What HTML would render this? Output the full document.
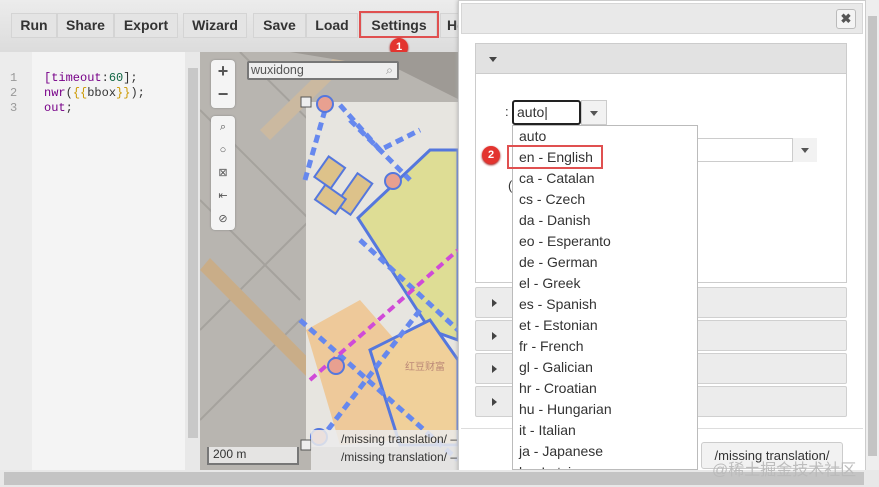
<!DOCTYPE html><html><head><meta charset="utf-8"><style>
*{box-sizing:border-box}body{margin:0;width:879px;height:487px;overflow:hidden;font-family:"Liberation Sans",Arial,sans-serif;background:#ddd;position:relative}
.a{position:absolute}
.tb{left:0;top:0;width:879px;height:52px;background:linear-gradient(#ececec,#dcdcdc)}
.btn{position:absolute;top:13px;height:25px;background:#e4e4e4;border:1px solid #d4d4d4;font-size:14px;color:#333;text-align:center;line-height:23px;font-weight:bold}
.mono{font-family:"Liberation Mono",monospace;font-size:12px}
.dd div{height:21px;line-height:21px;padding-left:6px;font-size:14px;color:#333}
.acc{left:475px;width:372px;height:31px;background:#ececec;border:1px solid #d0d0d0;border-radius:2px}
.tri{position:absolute;left:16px;top:11px;width:0;height:0;border-top:4px solid transparent;border-bottom:4px solid transparent;border-left:5px solid #444}
.badge{width:18px;height:18px;border-radius:9px;background:#e3342f;color:#fff;font-size:11px;font-weight:bold;text-align:center;line-height:18px;box-shadow:0 1px 2px #900}
</style></head><body>
<div class="a tb"></div>
<div class="btn" style="left:11px;width:46px">Run</div>
<div class="btn" style="left:57px;width:57px">Share</div>
<div class="btn" style="left:114px;width:64px">Export</div>
<div class="btn" style="left:183px;width:64px">Wizard</div>
<div class="btn" style="left:253px;width:53px">Save</div>
<div class="btn" style="left:306px;width:52px">Load</div>
<div class="btn" style="left:361px;width:76px">Settings</div>
<div class="a" style="left:359px;top:11px;width:80px;height:27px;border:2px solid #e05050"></div>
<div class="btn" style="left:440px;width:30px;text-align:left;padding-left:6px">He</div>
<div class="a badge" style="left:390px;top:38px">1</div>
<!-- editor -->
<div class="a" style="left:0;top:52px;width:32px;height:418px;background:#ececec"></div>
<div class="a" style="left:32px;top:52px;width:153px;height:418px;background:#f4f4f4"></div>
<div class="a mono" style="left:10px;top:71px;color:#999;line-height:15px">1<br>2<br>3</div>
<div class="a mono" style="left:44px;top:71px;line-height:15px;color:#333"><span style="color:#708">[timeout</span>:<span style="color:#164">60</span>];<br><span style="color:#708">nwr</span>(<span style="color:#c90">{{</span>bbox<span style="color:#c90">}}</span>);<br><span style="color:#708">out</span>;</div>
<div class="a" style="left:185px;top:52px;width:15px;height:418px;background:#e8e8e8"></div>
<div class="a" style="left:188px;top:68px;width:10px;height:370px;background:#c8c8c8"></div>
<!-- map -->
<svg class="a" style="left:200px;top:52px" width="260" height="418" viewBox="200 52 260 418">
<rect x="200" y="52" width="260" height="418" fill="#b8b5b0"/>
<g stroke="#a5a29d" stroke-width="2" fill="none"><path d="M200 110 L320 230 M200 200 L300 300 M240 52 L460 270 M200 330 L330 200 M200 420 L300 320"/></g>
<path d="M200 270 L320 390 L330 380 L210 258Z" fill="#c9ad88"/>
<path d="M260 130 L340 52 L360 52 L270 140Z" fill="#cbb9a0"/>
<path d="M290 52 L460 52 L460 100 L400 70Z" fill="#9e9a95"/>
<rect x="306" y="102" width="152" height="345" fill="#e7e5e0"/>
<path d="M358 218 L430 150 L458 150 L458 340 L430 330Z" fill="#dedd95" stroke="#5577dd" stroke-width="3"/>
<path d="M306 330 L360 300 L430 380 L400 440 L340 445Z" fill="#eec99a"/>
<path d="M370 350 L430 320 L458 360 L458 445 L400 445Z" fill="#f0d09a" stroke="#5577dd" stroke-width="3"/>
<g fill="#ddc28a" stroke="#5577dd" stroke-width="2"><rect x="320" y="160" width="20" height="25" transform="rotate(35 330 172)"/><rect x="345" y="175" width="18" height="38" transform="rotate(35 354 194)"/><rect x="318" y="190" width="25" height="18" transform="rotate(35 330 199)"/></g>
<g stroke="#6688ee" stroke-width="5" stroke-dasharray="8 5" fill="none"><path d="M325 110 L305 180 M340 105 L380 150 L420 130 M350 120 L410 180 M300 320 L458 460 M320 440 L420 310 M360 240 L458 330"/></g>
<path d="M310 380 L458 250" stroke="#d04ad8" stroke-width="4" stroke-dasharray="8 5"/>
<g fill="#e8a090" stroke="#5577dd" stroke-width="2"><circle cx="393" cy="181" r="8"/><circle cx="336" cy="366" r="8"/><circle cx="319" cy="437" r="8"/><circle cx="325" cy="104" r="8"/></g>
<text x="405" y="370" font-size="10" fill="#b87" font-family="Noto Sans CJK SC,sans-serif">红豆财富</text>
<rect x="301" y="97" width="10" height="10" fill="#eee" stroke="#555"/>
<rect x="301" y="440" width="10" height="10" fill="#eee" stroke="#555"/>
</svg>
<div class="a" style="left:247px;top:61px;width:152px;height:19px;background:#eee;border:2px solid #777;border-radius:2px;font-size:12.5px;color:#555;padding-left:2px;line-height:15px">wuxidong<span style="position:absolute;right:4px;color:#999">⌕</span></div>
<div class="a" style="left:211px;top:60px;width:24px;height:48px;background:#f4f4f4;border-radius:4px;box-shadow:0 0 2px #888;text-align:center;color:#555;font-size:18px;line-height:23px;font-weight:bold">+<br>−</div>
<div class="a" style="left:211px;top:116px;width:24px;height:114px;background:#f4f4f4;border-radius:4px;box-shadow:0 0 2px #888;text-align:center;color:#555;font-size:11px;line-height:23px">⌕<br>○<br>⊠<br>⇤<br>⊘</div>
<div class="a" style="left:207px;top:447px;width:92px;height:18px;background:rgba(240,240,240,.8);border:2px solid #777;border-top:none;font-size:12px;color:#333;padding-left:4px">200 m</div>
<div class="a" style="left:311px;top:430px;width:150px;height:40px;background:rgba(235,235,235,.85);font-size:12px;color:#333;line-height:18px;text-align:right;padding-right:4px">/missing translation/ –<br>/missing translation/ –</div>
<!-- dialog -->
<div class="a" style="left:458px;top:0;width:408px;height:487px;background:#fff;border:1px solid #ccc;box-shadow:0 0 4px #aaa"></div>
<div class="a" style="left:461px;top:3px;width:402px;height:31px;background:#e9e9e9;border:1px solid #d6d6d6"></div>
<div class="a" style="left:836px;top:9px;width:20px;height:20px;background:#f4f4f4;border:1px solid #bbb;border-radius:3px;text-align:center;line-height:18px;font-weight:bold;color:#555;font-size:13px">✖</div>
<div class="a" style="left:475px;top:43px;width:372px;height:240px;border:1px solid #ccc"></div>
<div class="a" style="left:475px;top:43px;width:372px;height:31px;background:#e2e2e2;border:1px solid #ccc"><div style="position:absolute;left:13px;top:13px;border-left:4px solid transparent;border-right:4px solid transparent;border-top:5px solid #444"></div></div>
<div class="a" style="left:505px;top:104px;font-size:13px;color:#333">:</div>
<div class="a" style="left:512px;top:138px;width:305px;height:24px;border:1px solid #ccc;border-radius:2px"></div>
<div class="a" style="left:792px;top:138px;width:25px;height:24px;border-left:1px solid #ccc;background:#f2f2f2"><div style="position:absolute;left:8px;top:10px;border-left:4px solid transparent;border-right:4px solid transparent;border-top:5px solid #555"></div></div>
<div class="a" style="left:508px;top:178px;font-size:13px;color:#333">(</div>
<div class="a" style="left:512px;top:100px;width:69px;height:25px;border:2px solid #222;border-radius:3px;font-size:14px;padding-left:3px;line-height:21px;color:#333">auto|</div>
<div class="a" style="left:581px;top:100px;width:26px;height:25px;border:1px solid #ccc;background:#f2f2f2"><div style="position:absolute;left:8px;top:10px;border-left:4px solid transparent;border-right:4px solid transparent;border-top:5px solid #555"></div></div>
<div class="a acc" style="top:287px"><div class="tri"></div></div>
<div class="a acc" style="top:320px"><div class="tri"></div></div>
<div class="a acc" style="top:353px"><div class="tri"></div></div>
<div class="a acc" style="top:386px"><div class="tri"></div></div>
<div class="a" style="left:461px;top:428px;width:402px;height:1px;background:#ddd"></div>
<div class="a" style="left:701px;top:442px;width:142px;height:27px;background:#f2f2f2;border:1px solid #ccc;border-radius:3px;font-size:13px;color:#333;text-align:center;line-height:25px">/missing translation/</div>
<div class="a dd" style="left:512px;top:125px;width:186px;height:345px;background:#fff;border:1px solid #bbb;overflow:hidden">
<div>auto</div><div>en - English</div><div>ca - Catalan</div><div>cs - Czech</div><div>da - Danish</div><div>eo - Esperanto</div><div>de - German</div><div>el - Greek</div><div>es - Spanish</div><div>et - Estonian</div><div>fr - French</div><div>gl - Galician</div><div>hr - Croatian</div><div>hu - Hungarian</div><div>it - Italian</div><div>ja - Japanese</div><div>lv - Latvian</div></div>
<div class="a" style="left:507px;top:145px;width:96px;height:24px;border:2px solid #e05050"></div>
<div class="a badge" style="left:482px;top:146px">2</div>
<div class="a" style="left:866px;top:0;width:13px;height:470px;background:#eee"></div>
<div class="a" style="left:868px;top:16px;width:9px;height:440px;background:#c4c4c4"></div>
<div class="a" style="left:0;top:470px;width:879px;height:17px;background:#e8e8e8"></div>
<div class="a" style="left:4px;top:472px;width:860px;height:13px;background:#c4c4c4"></div>
<div class="a" style="left:712px;top:456px;font-size:16px;color:rgba(185,185,185,.95);font-family:'Liberation Sans','Noto Sans CJK SC',sans-serif">@稀土掘金技术社区</div>
</body></html>
